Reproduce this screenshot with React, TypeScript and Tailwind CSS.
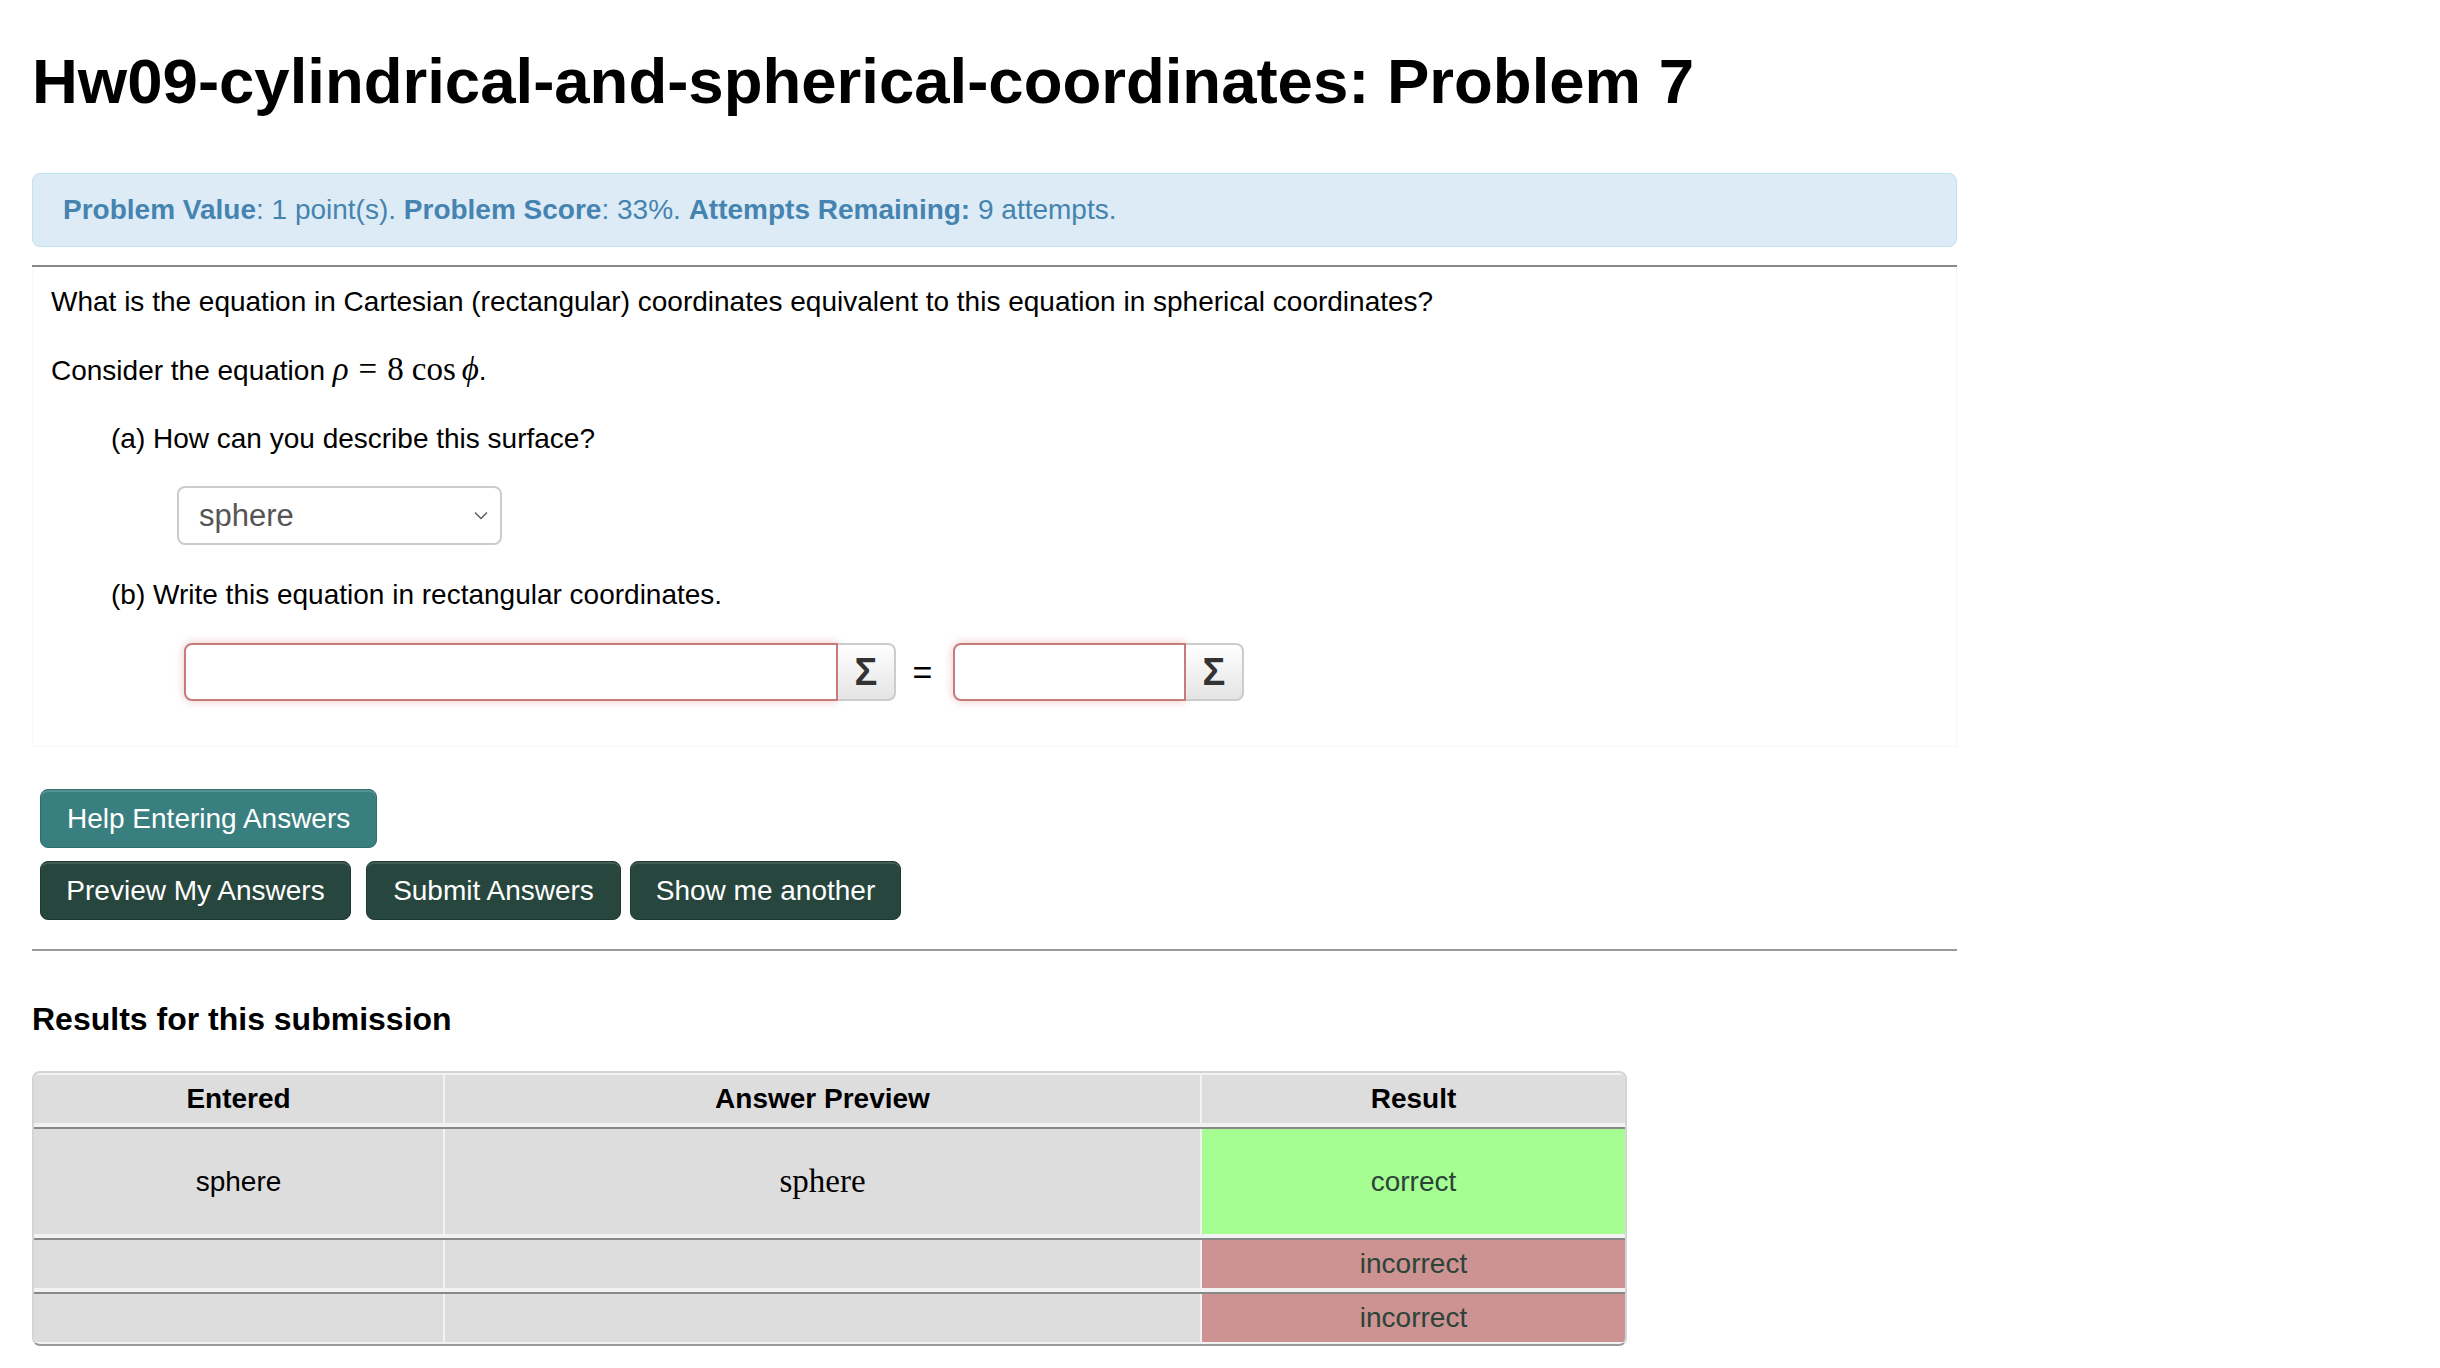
import React from "react";

const sans = "font-['Liberation_Sans',Arial,sans-serif]";
const serif = "font-['Liberation_Serif','Times_New_Roman',serif]";

function SigmaButton() {
  return (
    <div className="flex h-[58px] w-[58px] items-center justify-center rounded-r-[8px] border-2 border-l-0 border-[#cccccc] bg-gradient-to-b from-white to-[#e4e4e4]">
      <span className="text-[38px] font-bold leading-none text-[#333333]">Σ</span>
    </div>
  );
}

function AnswerBox({ width }: { width: string }) {
  return (
    <div className="flex items-center">
      <div
        className={`h-[58px] ${width} rounded-l-[8px] border-2 border-[#c77b7b] bg-white shadow-[0_0_10px_rgba(200,90,90,0.35)]`}
      />
      <SigmaButton />
    </div>
  );
}

const rows = [
  { entered: "sphere", preview: "sphere", result: "correct", tall: true },
  { entered: "", preview: "", result: "incorrect", tall: false },
  { entered: "", preview: "", result: "incorrect", tall: false },
];

export default function App() {
  return (
    <div className={`${sans} min-h-[1368px] w-full bg-white px-[32px] text-black`}>
      <div className="w-[1925px]">
        <h1 className="pt-[44px] text-[63.5px] font-bold leading-[74px]">
          Hw09-cylindrical-and-spherical-coordinates: Problem 7
        </h1>

        {/* score info */}
        <div className="mt-[55px] rounded-[8px] border border-[#bfe3ef] bg-[#ddebf6] px-[30px] py-[18px] text-[28px] leading-[36px] text-[#4584b0]">
          <b>Problem Value</b>: 1 point(s). <b>Problem Score</b>: 33%.{" "}
          <b>Attempts Remaining:</b> 9 attempts.
        </div>

        <div className="mt-[18px] border-t-2 border-[#888888]" />

        {/* problem body */}
        <div className="border border-t-0 border-[#f7f7f7] px-[18px] pb-[45px] pt-[17px] text-[28px] leading-[36px]">
          <p>
            What is the equation in Cartesian (rectangular) coordinates equivalent to this equation in
            spherical coordinates?
          </p>
          <p className="mt-[33px] h-[36px]">
            Consider the equation{" "}
            <span className={`${serif} text-[33px] leading-none`}>
              <i>ρ</i>
              <span className="mx-[10px]">=</span>8<span className="ml-[8px] mr-[6px]">cos</span>
              <i>ϕ</i>
            </span>
            .
          </p>
          <p className="mt-[32px] pl-[60px]">(a) How can you describe this surface?</p>
          <div className="ml-[126px] mt-[29px] flex h-[59px] w-[325px] items-center justify-between rounded-[8px] border-2 border-[#cccccc] bg-white pl-[20px] pr-[12px]">
            <span className="text-[31px] text-[#555555]">sphere</span>
            <svg width="14" height="9" viewBox="0 0 14 9" fill="none">
              <path d="M1 1.5 L7 7.5 L13 1.5" stroke="#555" strokeWidth="1.3" />
            </svg>
          </div>
          <p className="mt-[32px] pl-[60px]">(b) Write this equation in rectangular coordinates.</p>
          <div className="ml-[133px] mt-[30px] flex items-center">
            <AnswerBox width="w-[654px]" />
            <span className="ml-[16px] mr-[20px] w-[21px] text-center text-[34px] leading-none">=</span>
            <AnswerBox width="w-[233px]" />
          </div>
        </div>

        {/* buttons */}
        <div className="ml-[8px] mt-[42px]">
          <button className="flex h-[59px] items-center rounded-[8px] border border-[#2f6d6e] bg-[#3a7f80] px-[26px] text-[28px] text-white shadow-[inset_0_2px_0_rgba(255,255,255,0.15)]">
            Help Entering Answers
          </button>
          <div className="mt-[13px] flex">
            <button className="flex h-[59px] w-[311px] items-center justify-center rounded-[8px] border border-[#1d3831] bg-[#27463e] text-[28px] text-white shadow-[inset_0_2px_0_rgba(255,255,255,0.12)]">
              Preview My Answers
            </button>
            <button className="ml-[15px] flex h-[59px] w-[255px] items-center justify-center rounded-[8px] border border-[#1d3831] bg-[#27463e] text-[28px] text-white shadow-[inset_0_2px_0_rgba(255,255,255,0.12)]">
              Submit Answers
            </button>
            <button className="ml-[9px] flex h-[59px] w-[271px] items-center justify-center rounded-[8px] border border-[#1d3831] bg-[#27463e] text-[28px] text-white shadow-[inset_0_2px_0_rgba(255,255,255,0.12)]">
              Show me another
            </button>
          </div>
        </div>

        <div className="mt-[29px] border-t-2 border-[#999999]" />

        <h2 className="mt-[50px] text-[32px] font-bold leading-[36px]">Results for this submission</h2>

        {/* results table */}
        <div className="mt-[34px] w-[1595px] overflow-hidden rounded-[8px] border-2 border-[#d4d4d4] border-b-[#999999] bg-[#f2f2f2] text-[28px]">
          <div className="grid grid-cols-[409px_755px_1fr] gap-x-[2px] pt-[2px]">
            {["Entered", "Answer Preview", "Result"].map((h) => (
              <div key={h} className="flex h-[48px] items-center justify-center bg-[#dddddd] font-bold">
                {h}
              </div>
            ))}
          </div>
          {rows.map((r, i) => (
            <div
              key={i}
              className="mt-[4px] grid grid-cols-[409px_755px_1fr] gap-x-[2px] border-t-2 border-[#888888]"
            >
              <div className={`flex ${r.tall ? "h-[105px]" : "h-[48px]"} items-center justify-center bg-[#dddddd]`}>
                {r.entered}
              </div>
              <div
                className={`flex ${r.tall ? "h-[105px]" : "h-[48px]"} items-center justify-center bg-[#dddddd] ${serif} text-[33px]`}
              >
                {r.preview}
              </div>
              <div
                className={`flex ${r.tall ? "h-[105px]" : "h-[48px]"} items-center justify-center text-[#2b4338] ${
                  r.result === "correct" ? "bg-[#a6fd92]" : "bg-[#cd9292]"
                }`}
              >
                {r.result}
              </div>
            </div>
          ))}
          <div className="h-[2px]" />
        </div>
      </div>
    </div>
  );
}
